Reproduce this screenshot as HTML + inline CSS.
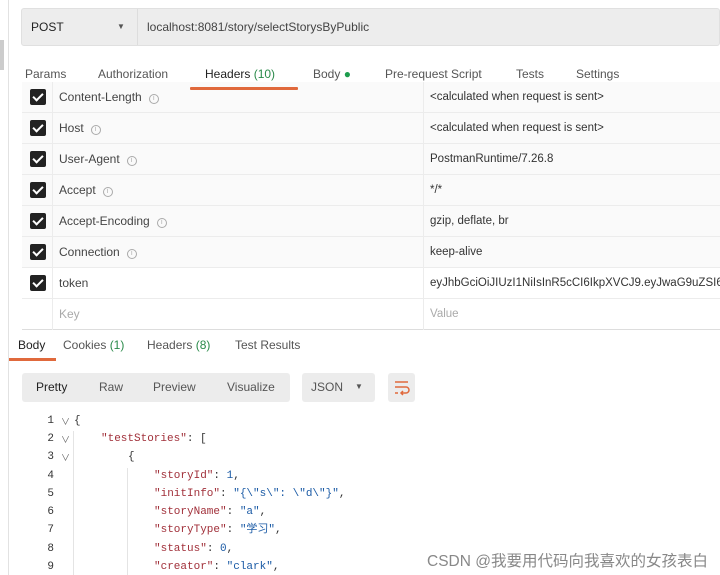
<!DOCTYPE html>
<html><head><meta charset="utf-8"><style>
*{margin:0;padding:0;box-sizing:border-box}
body{width:720px;height:575px;overflow:hidden;background:#fff;font-family:"Liberation Sans","Noto Sans CJK SC",sans-serif;color:#333;position:relative;font-size:12px}
.a{position:absolute;white-space:nowrap}
.tab{top:67px;font-size:12px;color:#555}
.row{position:absolute;left:22px;width:698px;height:31px;border-bottom:1px solid #ececec;background:#fafafa}
.cb{position:absolute;left:8px;top:7px;width:16px;height:16px;background:#222;border-radius:2px}
.cb:after{content:"";position:absolute;left:5px;top:2px;width:4px;height:8px;border:solid #fff;border-width:0 2px 2px 0;transform:rotate(45deg)}
.k{position:absolute;left:37px;top:8px;font-size:12px;color:#444}
.i{display:inline-block;width:10px;height:10px;border:1px solid #aaa;border-radius:50%;margin-left:7px;font-size:7px;text-align:center;line-height:8px;color:#aaa;vertical-align:1px}
.v{position:absolute;left:408px;top:9px;font-size:11.5px;color:#333}
.div{position:absolute;left:401px;top:0;width:1px;height:31px;background:#ececec}
.code{font-family:"Liberation Mono","Noto Sans CJK SC",monospace;font-size:11px;color:#333;line-height:14px;height:14px}
.ln{position:absolute;left:36px;width:18px;text-align:right;font-family:"Liberation Mono",monospace;font-size:11px;color:#333;line-height:14px}
.ar{position:absolute;left:61px;font-size:9px;color:#666}
.s{color:#a1303a}.n{color:#1a5aa5}
</style></head><body>
<div class="a" style="left:8px;top:0;width:1px;height:575px;background:#e2e2e2"></div>
<div class="a" style="left:0;top:40px;width:4px;height:30px;background:#ccc"></div>
<div class="a" style="left:21px;top:8px;width:699px;height:38px;background:#ededed;border:1px solid #e0e0e0;border-radius:3px"></div>
<div class="a" style="left:137px;top:9px;width:1px;height:36px;background:#ddd"></div>
<div class="a" style="left:31px;top:20px;font-size:12px;color:#222">POST</div>
<div class="a" style="left:117px;top:22px;font-size:8px;color:#555">▼</div>
<div class="a" style="left:147px;top:20px;font-size:12px;color:#444">localhost:8081/story/selectStorysByPublic</div>
<div class="a tab" style="left:25px">Params</div>
<div class="a tab" style="left:98px">Authorization</div>
<div class="a tab" style="left:205px;color:#222">Headers <span style="color:#2a8a4a">(10)</span></div>
<div class="a tab" style="left:313px">Body <span style="color:#1c9c4c">●</span></div>
<div class="a tab" style="left:385px">Pre-request Script</div>
<div class="a tab" style="left:516px">Tests</div>
<div class="a tab" style="left:576px">Settings</div>

<div class="row" style="top:82px"><div class="cb"></div><div class="k">Content-Length<span class="i">i</span></div><div class="div"></div><div class="v">&lt;calculated when request is sent&gt;</div></div>
<div class="row" style="top:113px"><div class="cb"></div><div class="k">Host<span class="i">i</span></div><div class="div"></div><div class="v">&lt;calculated when request is sent&gt;</div></div>
<div class="row" style="top:144px"><div class="cb"></div><div class="k">User-Agent<span class="i">i</span></div><div class="div"></div><div class="v">PostmanRuntime/7.26.8</div></div>
<div class="row" style="top:175px"><div class="cb"></div><div class="k">Accept<span class="i">i</span></div><div class="div"></div><div class="v">*/*</div></div>
<div class="row" style="top:206px"><div class="cb"></div><div class="k">Accept-Encoding<span class="i">i</span></div><div class="div"></div><div class="v">gzip, deflate, br</div></div>
<div class="row" style="top:237px"><div class="cb"></div><div class="k">Connection<span class="i">i</span></div><div class="div"></div><div class="v">keep-alive</div></div>
<div class="row" style="top:268px;background:#fff"><div class="cb"></div><div class="k">token</div><div class="div"></div><div class="v">eyJhbGciOiJIUzI1NiIsInR5cCI6IkpXVCJ9.eyJwaG9uZSI6</div></div>
<div class="row" style="top:299px;background:#fff;border-bottom:1px solid #ddd"><div class="k" style="color:#aaa">Key</div><div class="div"></div><div class="v" style="color:#aaa">Value</div></div>
<div class="a" style="left:52px;top:82px;width:1px;height:248px;background:#ececec"></div>
<div class="a" style="left:190px;top:87px;width:108px;height:3px;background:#e0693c;border-radius:1px;z-index:5"></div>

<div class="a" style="left:18px;top:338px;font-size:12px;color:#222">Body</div>
<div class="a" style="left:63px;top:338px;font-size:12px;color:#555">Cookies <span style="color:#2a8a4a">(1)</span></div>
<div class="a" style="left:147px;top:338px;font-size:12px;color:#555">Headers <span style="color:#2a8a4a">(8)</span></div>
<div class="a" style="left:235px;top:338px;font-size:12px;color:#555">Test Results</div>
<div class="a" style="left:9px;top:358px;width:47px;height:3px;background:#e0693c"></div>

<div class="a" style="left:22px;top:373px;width:268px;height:29px;background:#ececec;border-radius:3px"></div>
<div class="a" style="left:36px;top:380px;font-size:12px;color:#222">Pretty</div>
<div class="a" style="left:99px;top:380px;font-size:12px;color:#555">Raw</div>
<div class="a" style="left:153px;top:380px;font-size:12px;color:#555">Preview</div>
<div class="a" style="left:227px;top:380px;font-size:12px;color:#555">Visualize</div>
<div class="a" style="left:302px;top:373px;width:73px;height:29px;background:#ececec;border-radius:3px"></div>
<div class="a" style="left:311px;top:380px;font-size:12px;color:#555">JSON</div>
<div class="a" style="left:355px;top:382px;font-size:8px;color:#555">▼</div>
<div class="a" style="left:388px;top:373px;width:27px;height:29px;background:#ececec;border-radius:3px"></div>
<svg class="a" style="left:392px;top:378px" width="20" height="20" viewBox="0 0 20 20" fill="none" stroke="#e0693c" stroke-width="1.5"><path d="M3 4h13M3 9h11a3 3 0 0 1 0 6h-5M11 13l-2 2 2 2M3 15h3"/></svg>

<div class="a" style="left:73px;top:431px;width:1px;height:144px;background:#e4e4e4"></div>
<div class="a" style="left:127px;top:468px;width:1px;height:107px;background:#e4e4e4"></div>

<div class="ln" style="top:414px">1</div><div class="ar" style="top:415px">∨</div>
<div class="ln" style="top:432px">2</div><div class="ar" style="top:433px">∨</div>
<div class="ln" style="top:450px">3</div><div class="ar" style="top:451px">∨</div>
<div class="ln" style="top:469px">4</div>
<div class="ln" style="top:487px">5</div>
<div class="ln" style="top:505px">6</div>
<div class="ln" style="top:523px">7</div>
<div class="ln" style="top:542px">8</div>
<div class="ln" style="top:560px">9</div>
<div class="a code" style="left:74px;top:414px">{</div>
<div class="a code" style="left:101px;top:432px"><span class="s">"testStories"</span>: [</div>
<div class="a code" style="left:128px;top:450px">{</div>
<div class="a code" style="left:154px;top:469px"><span class="s">"storyId"</span>: <span class="n">1</span>,</div>
<div class="a code" style="left:154px;top:487px"><span class="s">"initInfo"</span>: <span class="n">"{\"s\": \"d\"}"</span>,</div>
<div class="a code" style="left:154px;top:505px"><span class="s">"storyName"</span>: <span class="n">"a"</span>,</div>
<div class="a code" style="left:154px;top:523px"><span class="s">"storyType"</span>: <span class="n">"学习"</span>,</div>
<div class="a code" style="left:154px;top:542px"><span class="s">"status"</span>: <span class="n">0</span>,</div>
<div class="a code" style="left:154px;top:560px"><span class="s">"creator"</span>: <span class="n">"clark"</span>,</div>
<div class="a" style="left:427px;top:549px;font-size:15.5px;color:#888">CSDN @我要用代码向我喜欢的女孩表白</div>
</body></html>
